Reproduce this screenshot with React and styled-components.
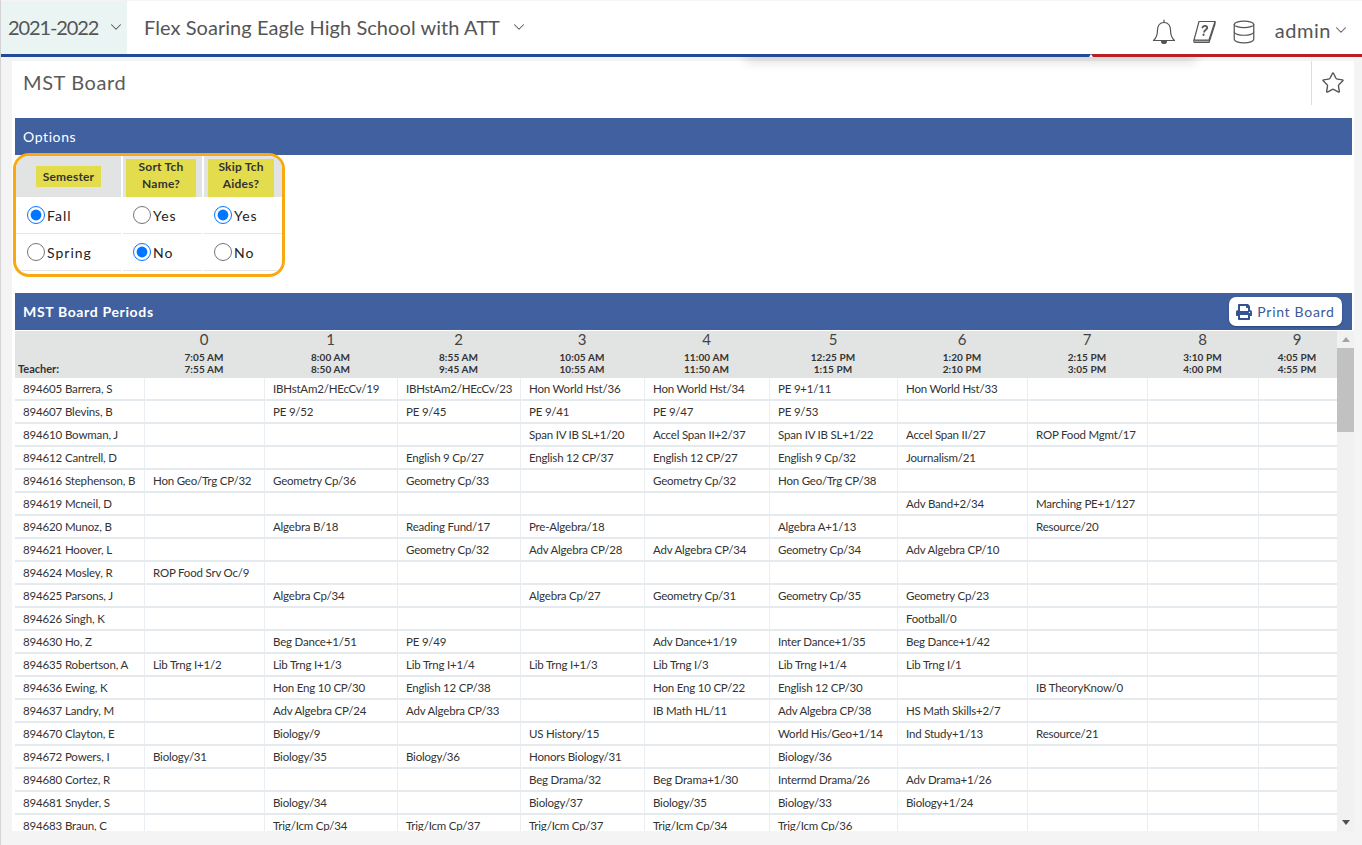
import React from "react";
import styled, { createGlobalStyle } from "styled-components";
import { ChevronDown, Database, Star } from "lucide-react";
import { FaPrint } from "react-icons/fa";

const fontStack = `Lato, "Open Sans", sans-serif`;

const periods = [
  { n: "0", from: "7:05 AM", to: "7:55 AM" },
  { n: "1", from: "8:00 AM", to: "8:50 AM" },
  { n: "2", from: "8:55 AM", to: "9:45 AM" },
  { n: "3", from: "10:05 AM", to: "10:55 AM" },
  { n: "4", from: "11:00 AM", to: "11:50 AM" },
  { n: "5", from: "12:25 PM", to: "1:15 PM" },
  { n: "6", from: "1:20 PM", to: "2:10 PM" },
  { n: "7", from: "2:15 PM", to: "3:05 PM" },
  { n: "8", from: "3:10 PM", to: "4:00 PM" },
  { n: "9", from: "4:05 PM", to: "4:55 PM" },
];

const rows = [
  ["894605 Barrera, S", "", "IBHstAm2/HEcCv/19", "IBHstAm2/HEcCv/23", "Hon World Hst/36", "Hon World Hst/34", "PE 9+1/11", "Hon World Hst/33", ""],
  ["894607 Blevins, B", "", "PE 9/52", "PE 9/45", "PE 9/41", "PE 9/47", "PE 9/53", "", ""],
  ["894610 Bowman, J", "", "", "", "Span IV IB SL+1/20", "Accel Span II+2/37", "Span IV IB SL+1/22", "Accel Span II/27", "ROP Food Mgmt/17"],
  ["894612 Cantrell, D", "", "", "English 9 Cp/27", "English 12 CP/37", "English 12 CP/27", "English 9 Cp/32", "Journalism/21", ""],
  ["894616 Stephenson, B", "Hon Geo/Trg CP/32", "Geometry Cp/36", "Geometry Cp/33", "", "Geometry Cp/32", "Hon Geo/Trg CP/38", "", ""],
  ["894619 Mcneil, D", "", "", "", "", "", "", "Adv Band+2/34", "Marching PE+1/127"],
  ["894620 Munoz, B", "", "Algebra B/18", "Reading Fund/17", "Pre-Algebra/18", "", "Algebra A+1/13", "", "Resource/20"],
  ["894621 Hoover, L", "", "", "Geometry Cp/32", "Adv Algebra CP/28", "Adv Algebra CP/34", "Geometry Cp/34", "Adv Algebra CP/10", ""],
  ["894624 Mosley, R", "ROP Food Srv Oc/9", "", "", "", "", "", "", ""],
  ["894625 Parsons, J", "", "Algebra Cp/34", "", "Algebra Cp/27", "Geometry Cp/31", "Geometry Cp/35", "Geometry Cp/23", ""],
  ["894626 Singh, K", "", "", "", "", "", "", "Football/0", ""],
  ["894630 Ho, Z", "", "Beg Dance+1/51", "PE 9/49", "", "Adv Dance+1/19", "Inter Dance+1/35", "Beg Dance+1/42", ""],
  ["894635 Robertson, A", "Lib Trng I+1/2", "Lib Trng I+1/3", "Lib Trng I+1/4", "Lib Trng I+1/3", "Lib Trng I/3", "Lib Trng I+1/4", "Lib Trng I/1", ""],
  ["894636 Ewing, K", "", "Hon Eng 10 CP/30", "English 12 CP/38", "", "Hon Eng 10 CP/22", "English 12 CP/30", "", "IB TheoryKnow/0"],
  ["894637 Landry, M", "", "Adv Algebra CP/24", "Adv Algebra CP/33", "", "IB Math HL/11", "Adv Algebra CP/38", "HS Math Skills+2/7", ""],
  ["894670 Clayton, E", "", "Biology/9", "", "US History/15", "", "World His/Geo+1/14", "Ind Study+1/13", "Resource/21"],
  ["894672 Powers, I", "Biology/31", "Biology/35", "Biology/36", "Honors Biology/31", "", "Biology/36", "", ""],
  ["894680 Cortez, R", "", "", "", "Beg Drama/32", "Beg Drama+1/30", "Intermd Drama/26", "Adv Drama+1/26", ""],
  ["894681 Snyder, S", "", "Biology/34", "", "Biology/37", "Biology/35", "Biology/33", "Biology+1/24", ""],
  ["894683 Braun, C", "", "Trig/Icm Cp/34", "Trig/Icm Cp/37", "Trig/Icm Cp/37", "Trig/Icm Cp/34", "Trig/Icm Cp/36", "", ""],
];

const GlobalStyle = createGlobalStyle`
  html, body { margin: 0; padding: 0; background: #f4f4f4; }
  * { box-sizing: border-box; }
  body { font-family: ${fontStack}; overflow: hidden; }
`;

const Page = styled.div`
  position: relative;
  width: 1362px;
  height: 845px;
  overflow: hidden;
  border-left: 1px solid #d4d4d4;
`;

const TopBar = styled.header`
  height: 53px;
  margin-top: 1px;
  margin-left: -1px;
  display: flex;
  align-items: stretch;
  background: #fff;
  color: #555;
`;

const YearPicker = styled.div`
  width: 127px;
  padding: 0 0 2px 8px;
  display: flex;
  align-items: center;
  gap: 9px;
  background: #eaf4f3;
  font-size: 20px;
  letter-spacing: -1.1px;
  white-space: nowrap;
  svg { flex: none; }
`;

const SchoolPicker = styled.div`
  margin-left: 17px;
  padding-bottom: 2px;
  display: flex;
  align-items: center;
  gap: 10px;
  font-size: 20px;
  letter-spacing: 0.06px;
  white-space: nowrap;
`;

const TopActions = styled.div`
  margin-left: auto;
  padding: 8px 12px 0 0;
  display: flex;
  align-items: center;
  color: #555;
`;

const IconSlot = styled.span`
  display: flex;
  width: 26px;
  justify-content: center;
  margin-right: ${(p) => p.$gap}px;
`;

const UserMenu = styled.span`
  padding-bottom: 4px;
  display: flex;
  align-items: center;
  gap: 1px;
  font-size: 20px;
  letter-spacing: 0.55px;
`;

const RuleRow = styled.div`
  height: 3px;
  margin-left: -1px;
  display: flex;
`;

const BlueRule = styled.div`
  width: 1091px;
  background: #234a96;
  clip-path: polygon(0 0, 100% 0, calc(100% - 2px) 100%, 0 100%);
`;

const RedRule = styled.div`
  flex: 1;
  background: #b92025;
  clip-path: polygon(0 0, 100% 0, 100% 100%, 2px 100%);
`;

const MenuShadow = styled.div`
  position: absolute;
  left: 745px;
  top: 30px;
  width: 450px;
  height: 27px;
  box-shadow: 0 4px 12px rgba(0, 0, 0, 0.16);
  clip-path: inset(27px -20px -20px -20px);
  z-index: 2;
`;

const Panel = styled.main`
  margin: 4px 0 0 11px;
  width: 1342px;
  height: 770px;
  padding-left: 3px;
  background: #fff;
  overflow: hidden;
`;

const TitleRow = styled.div`
  height: 57px;
  display: flex;
  align-items: flex-start;
  justify-content: space-between;
`;

const PageTitle = styled.h1`
  margin: 7px 0 0 8px;
  font-size: 20px;
  line-height: 28px;
  font-weight: 400;
  letter-spacing: 0.6px;
  color: #5a5a5a;
`;

const StarBox = styled.div`
  width: 43px;
  height: 44px;
  display: flex;
  align-items: center;
  justify-content: center;
  border-left: 1px solid #ddd;
  color: #555;
`;

const SectionBar = styled.div`
  width: 1337px;
  height: 37px;
  padding: 0 10px 0 8px;
  display: flex;
  align-items: center;
  justify-content: space-between;
  background: #4060a0;
  color: #fff;
  font-size: 14px;
  font-weight: ${(p) => (p.$strong ? 700 : 400)};
  letter-spacing: ${(p) => (p.$strong ? 0.65 : 0.6)}px;
`;

const OptionsFrame = styled.div`
  position: relative;
  z-index: 1;
  width: 272px;
  height: 124px;
  margin: -2px 0 16px -2px;
  border: 3px solid #f9a80f;
  border-radius: 16px;
  overflow: hidden;
  display: grid;
  grid-template-columns: 105px 79px 78px;
  grid-auto-rows: min-content;
  column-gap: 2px;
`;

const OptionHead = styled.div`
  height: 42px;
  margin-top: -1px;
  display: flex;
  align-items: center;
  justify-content: center;
  background: #e2e3e3;
`;

const OptionLabel = styled.span`
  width: ${(p) => p.$w}px;
  height: ${(p) => p.$h}px;
  margin: ${(p) => (p.$tall ? 4 : 0)}px ${(p) => p.$shift}px 0 0;
  padding-bottom: ${(p) => (p.$tall ? 6 : 0)}px;
  display: flex;
  align-items: center;
  justify-content: center;
  text-align: center;
  background: #e3dc4c;
  font-size: 12px;
  line-height: 17px;
  font-weight: 700;
  color: #333;
  letter-spacing: 0.2px;
`;

const OptionCell = styled.label`
  height: 37px;
  padding-left: ${(p) => p.$pad}px;
  display: flex;
  align-items: center;
  border-bottom: 1px solid #e6e6e6;
  font-size: 14px;
  color: #222;
  letter-spacing: 1px;

  input {
    width: 18px;
    height: 18px;
    margin: 0 2px 0 0;
    flex: none;
  }
`;

const PrintButton = styled.button`
  width: 113px;
  height: 29px;
  padding: 0;
  display: flex;
  align-items: center;
  justify-content: center;
  gap: 5px;
  border: 0;
  border-radius: 7px;
  background: #fff;
  box-shadow: 0 1px 2px rgba(0, 0, 0, 0.3);
  color: #3a5a9c;
  font-family: inherit;
  font-size: 14px;
  letter-spacing: 0.7px;
`;

const BoardWrap = styled.div`
  margin-top: 1px;
  display: flex;
  width: 1339px;
  height: 500px;
`;

const Grid = styled.div`
  width: 1322px;
  overflow: hidden;
`;

const columns = "130px 120px 133px 123px 124px 125px 128px 130px 120px 111px 78px";

const HeadRow = styled.div`
  height: 47px;
  display: grid;
  grid-template-columns: ${columns};
  background: #e2e3e3;
  color: #333;
`;

const TeacherHead = styled.div`
  align-self: end;
  padding: 0 0 3px 3px;
  font-size: 11px;
  line-height: 13px;
  font-weight: 700;
`;

const PeriodHead = styled.div`
  padding-right: 2px;
  text-align: center;
`;

const PeriodNumber = styled.div`
  font-size: 15px;
  line-height: 17px;
  color: #444;
`;

const PeriodTimes = styled.div`
  margin-top: 3px;
`;

const PeriodTime = styled.div`
  font-size: 10px;
  line-height: 12px;
  font-weight: 700;
  letter-spacing: 0.1px;
`;

const BodyRow = styled.div`
  height: 23px;
  display: grid;
  grid-template-columns: ${columns};
  border-bottom: 2px solid #e4eaed;
`;

const Cell = styled.div`
  padding-left: 8px;
  border-right: 1px solid #e8eef1;
  font-size: 11.5px;
  line-height: 21px;
  color: #333;
  white-space: nowrap;
  letter-spacing: -0.2px;
  &:first-child { letter-spacing: -0.15px; }
  &:last-child { border-right: 0; }
`;

const ScrollTrack = styled.div`
  width: 17px;
  display: flex;
  flex-direction: column;
  align-items: stretch;
  background: #f1f1f1;
`;

const ScrollArrow = styled.div`
  height: 17px;
  display: flex;
  align-items: center;
  justify-content: center;
  &::before {
    content: "";
    border-left: 4px solid transparent;
    border-right: 4px solid transparent;
    ${(p) => (p.$down ? "border-top: 5px solid #505050;" : "border-bottom: 5px solid #a3a3a3;")}
  }
`;

const ScrollThumb = styled.div`
  height: 84px;
  background: #c1c1c1;
`;

const ScrollRest = styled.div`
  flex: 1;
`;

const BellIcon = () => (
  <svg width="24" height="28" viewBox="0 0 24 28" fill="none" stroke="#555" strokeWidth="1.2" strokeLinejoin="round" strokeLinecap="round">
    <path d="M12 2v2.500" />
    <path d="M12 4.500c-4.500 0-6.500 3.500-6.500 7.500 0 5-1 8-4 10.500h21c-3-2.500-4-5.500-4-10.500 0-4-2-7.500-6.500-7.500z" />
    <path d="M9.500 23a2.500 2.500 0 0 0 5 0z" fill="#555" />
  </svg>
);

const HelpBook = () => (
  <svg width="28" height="28" viewBox="0 0 26 26" fill="none" stroke="#555" strokeWidth="1.2" strokeLinejoin="round" strokeLinecap="round">
    <path d="M8 2.500h16l-6 18.500H3z" />
    <path d="M3 21c-.6 1.600 0 2.500 1.200 2.500H18l6-18.500V2.500" />
    <path d="M4 21.800h14" />
    <path d="M11.500 8.500c.6-2 5-2.200 4.700.4-.2 1.800-2.500 1.800-3 3.900" strokeWidth="1.800" />
    <path d="M12.600 15.500l-.1.500" strokeWidth="2" />
  </svg>
);

const optionColumns = [
  { name: "semester", pad: 11, values: ["Fall", "Spring"], checked: 0 },
  { name: "sort", pad: 10, values: ["Yes", "No"], checked: 1 },
  { name: "skip", pad: 10, values: ["Yes", "No"], checked: 0 },
];

export default function App() {
  return (
    <>
      <GlobalStyle />
      <Page>
        <TopBar>
          <YearPicker>
            2021-2022 <ChevronDown size={18} strokeWidth={1.4} />
          </YearPicker>
          <SchoolPicker>
            Flex Soaring Eagle High School with ATT <ChevronDown size={18} strokeWidth={1.4} />
          </SchoolPicker>
          <TopActions>
            <IconSlot $gap={14}><BellIcon /></IconSlot>
            <IconSlot $gap={14}><HelpBook /></IconSlot>
            <IconSlot $gap={18}><Database size={28} strokeWidth={1.15} /></IconSlot>
            <UserMenu>admin <ChevronDown size={18} strokeWidth={1.4} /></UserMenu>
          </TopActions>
        </TopBar>
        <RuleRow>
          <BlueRule />
          <RedRule />
        </RuleRow>
        <MenuShadow />
        <Panel>
          <TitleRow>
            <PageTitle>MST Board</PageTitle>
            <StarBox><Star size={24} strokeWidth={1.4} /></StarBox>
          </TitleRow>
          <SectionBar>Options</SectionBar>
          <OptionsFrame>
            <OptionHead><OptionLabel $w={65} $h={21} $shift={0}>Semester</OptionLabel></OptionHead>
            <OptionHead><OptionLabel $w={70} $h={38} $shift={3} $tall>Sort Tch Name?</OptionLabel></OptionHead>
            <OptionHead><OptionLabel $w={66} $h={38} $shift={4} $tall>Skip Tch Aides?</OptionLabel></OptionHead>
            {[0, 1].map((row) =>
              optionColumns.map((col) => (
                <OptionCell key={col.name + row} $pad={col.pad}>
                  <input type="radio" name={col.name} defaultChecked={col.checked === row} />
                  {col.values[row]}
                </OptionCell>
              ))
            )}
          </OptionsFrame>
          <SectionBar $strong>
            MST Board Periods
            <PrintButton><FaPrint size={16} color="#34548f" /> Print Board</PrintButton>
          </SectionBar>
          <BoardWrap>
            <Grid>
              <HeadRow>
                <TeacherHead>Teacher:</TeacherHead>
                {periods.map((p) => (
                  <PeriodHead key={p.n}>
                    <PeriodNumber>{p.n}</PeriodNumber>
                    <PeriodTimes>
                      <PeriodTime>{p.from}</PeriodTime>
                      <PeriodTime>{p.to}</PeriodTime>
                    </PeriodTimes>
                  </PeriodHead>
                ))}
              </HeadRow>
              {rows.map((row) => (
                <BodyRow key={row[0]}>
                  {row.map((text, i) => <Cell key={i}>{text}</Cell>)}
                  <Cell />
                  <Cell />
                </BodyRow>
              ))}
            </Grid>
            <ScrollTrack>
              <ScrollArrow />
              <ScrollThumb />
              <ScrollRest />
              <ScrollArrow $down />
            </ScrollTrack>
          </BoardWrap>
        </Panel>
      </Page>
    </>
  );
}
